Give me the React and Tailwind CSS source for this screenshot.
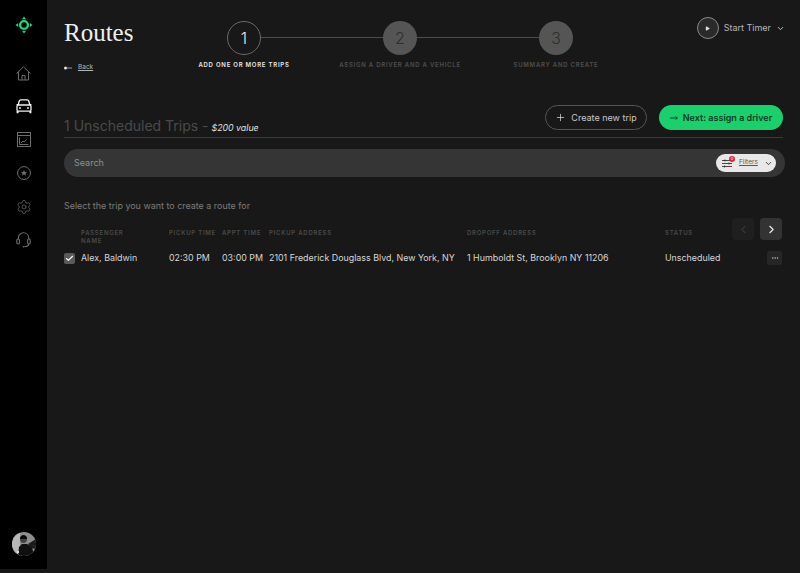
import React from "react";
import { Check, ChevronDown, ChevronLeft, ChevronRight, Plus, Play, Ellipsis, Settings } from "lucide-react";

const inter = { fontFamily: "Inter, 'Liberation Sans', sans-serif" };
const ICON = "#6e6e6e";

function Logo() {
  return (
    <svg width="18" height="18" viewBox="0 0 18 18" fill="none">
      <circle cx="9" cy="9" r="3.9" stroke="#1fd573" strokeWidth="2.4" />
      <path d="M9 0.5 L11 3.2 H7 Z M9 17.5 L7 14.8 H11 Z M0.5 9 L3.2 7 V11 Z M17.5 9 L14.8 11 V7 Z" fill="#1fd573" />
    </svg>
  );
}

function HomeIcon() {
  return (
    <svg width="15" height="15" viewBox="0 0 15 15" fill="none" stroke={ICON} strokeWidth="1">
      <path d="M0.5 7.5 L7.5 0.8 L14.5 7.5" />
      <path d="M2.5 6 V14 H12.5 V6" />
      <path d="M6 14 V9.5 H9 V14" />
    </svg>
  );
}

function CarIcon() {
  return (
    <svg width="16" height="15" viewBox="0 0 16 15" fill="none" stroke="#f2f2f2" strokeWidth="1.3">
      <path d="M2.2 6 L3.2 2 C3.4 1.2 4 0.8 4.8 0.8 H11.2 C12 0.8 12.6 1.2 12.8 2 L13.8 6" />
      <rect x="1" y="6" width="14" height="6.2" rx="1.4" />
      <path d="M1.6 12 V14.2 M14.4 12 V14.2" strokeWidth="2" />
      <path d="M0.6 5.6 H2.6 M13.4 5.6 H15.4" />
      <circle cx="4" cy="9" r="0.9" fill="#f2f2f2" stroke="none" />
      <circle cx="12" cy="9" r="0.9" fill="#f2f2f2" stroke="none" />
    </svg>
  );
}

function ReportIcon() {
  return (
    <svg width="14" height="15" viewBox="0 0 14 15" fill="none" stroke={ICON} strokeWidth="1">
      <rect x="0.5" y="0.5" width="13" height="14" />
      <path d="M0.5 3.5 H13.5" />
      <path d="M2.5 5.5 V12.5 H11.5" />
      <path d="M4 11 L6 9 L7.2 10 L9.5 7.5" />
    </svg>
  );
}

function StarCircle() {
  return (
    <svg width="14" height="14" viewBox="0 0 14 14" fill="none">
      <circle cx="7" cy="7" r="6.4" stroke={ICON} />
      <path d="M7 4 L7.9 6 L10 6.2 L8.4 7.6 L8.9 9.7 L7 8.6 L5.1 9.7 L5.6 7.6 L4 6.2 L6.1 6 Z" fill={ICON} />
    </svg>
  );
}

function HeadsetIcon() {
  return (
    <svg width="15" height="16" viewBox="0 0 15 16" fill="none" stroke={ICON} strokeWidth="1.1">
      <path d="M2.3 7 V6 C2.3 3 4.6 0.8 7.5 0.8 C10.4 0.8 12.7 3 12.7 6 V7" />
      <rect x="0.8" y="7" width="2.6" height="5" rx="1.2" />
      <rect x="11.6" y="7" width="2.6" height="5" rx="1.2" />
      <path d="M12.7 12 C12.7 13.6 11 14.6 8.6 14.6" />
      <circle cx="7.6" cy="14.6" r="0.9" fill={ICON} stroke="none" />
    </svg>
  );
}

function Avatar() {
  return (
    <svg width="24" height="24" viewBox="0 0 24 24">
      <defs>
        <clipPath id="av"><circle cx="12" cy="12" r="12" /></clipPath>
      </defs>
      <g clipPath="url(#av)">
        <rect width="24" height="24" fill="#8f8f8f" />
        <rect x="0" y="0" width="8" height="24" fill="#b8b8b8" />
        <path d="M6 24 L7 15 L10 12 L15 12 L20 15 L22 24 Z" fill="#101010" />
        <path d="M16 12 L24 7 V17 L19 16 Z" fill="#1c1c1c" />
        <circle cx="11.5" cy="7.5" r="3.4" fill="#444" />
        <path d="M8 6 C8.5 2 14.5 2 15 6 L15 7 H8 Z" fill="#0a0a0a" />
        <rect x="5" y="19" width="2" height="2" fill="#ddd" />
      </g>
    </svg>
  );
}

function Step({ n, label, active }) {
  return (
    <div className="relative flex w-[34px] flex-col items-center">
      <div
        className={
          active
            ? "z-10 flex h-[34px] w-[34px] items-center justify-center rounded-full border border-[#6a6a6a] bg-[#181818] text-[16px] font-light text-[#ececec]"
            : "z-10 flex h-[34px] w-[34px] items-center justify-center rounded-full bg-[#555555] text-[16px] font-light text-[#2e2e2e]"
        }
      >
        {n}
      </div>
      <div
        className={
          "absolute top-[39px] whitespace-nowrap text-[6px] font-semibold tracking-[0.75px] " +
          (active ? "text-[#e8e8e8]" : "text-[#4f4f4f]")
        }
      >
        {label}
      </div>
    </div>
  );
}

const headCls = "text-[6px] font-semibold leading-[7.5px] tracking-[0.75px] text-[#4a4a4a]";
const cellCls = "text-[8.9px] whitespace-nowrap text-[#d6d6d6]";

export default function App() {
  return (
    <div className="flex h-[573px] w-[800px] overflow-hidden bg-[#181818] antialiased" style={inter}>
      <aside className="flex h-[569px] w-[47px] shrink-0 flex-col items-center bg-black pt-[16px]">
        <Logo />
        <div className="mt-[31px] flex flex-col items-center gap-[17.4px]">
          <div className="flex h-[16px] items-center"><HomeIcon /></div>
          <div className="flex h-[16px] items-center"><CarIcon /></div>
          <div className="flex h-[16px] items-center"><ReportIcon /></div>
          <div className="flex h-[16px] items-center"><StarCircle /></div>
          <div className="flex h-[16px] items-center"><Settings size={16} strokeWidth={1.1} color={ICON} /></div>
          <div className="flex h-[16px] items-center"><HeadsetIcon /></div>
        </div>
        <div className="mt-auto mb-[13px]"><Avatar /></div>
      </aside>

      <main className="flex min-w-0 flex-1 flex-col pl-[17px] pr-[17px]">
        <header className="flex h-[105px] items-start">
          <div className="w-[134px] pt-[19px]">
            <h1 className="text-[25px] leading-[28px] text-[#efefef]" style={{ fontFamily: "'Liberation Serif', serif" }}>Routes</h1>
            <div className="mt-[16px] flex items-center gap-[6px]">
              <svg width="8" height="4" viewBox="0 0 8 4"><circle cx="1.5" cy="2" r="1.5" fill="#e5e5e5" /><path d="M2 2 H8" stroke="#bbb" strokeWidth="0.8" /></svg>
              <span className="text-[6.5px] text-[#b5b5b5] underline">Back</span>
            </div>
          </div>
          <div className="relative ml-[29px] mt-[21px] flex w-[346px] items-center justify-between">
            <div className="absolute left-[17px] right-[17px] top-[16px] h-[1px] bg-[#4c4c4c]" />
            <Step n="1" label="ADD ONE OR MORE TRIPS" active />
            <Step n="2" label="ASSIGN A DRIVER AND A VEHICLE" />
            <Step n="3" label="SUMMARY AND CREATE" />
          </div>
          <div className="ml-auto -mr-[2px] mt-[17px] flex items-center gap-[5px]">
            <div className="flex h-[22px] w-[22px] items-center justify-center rounded-full border border-[#8a8a8a] bg-[#2a2a2a]">
              <Play size={5} fill="#e5e5e5" color="#e5e5e5" />
            </div>
            <span className="text-[9px] text-[#b5b5b5]">Start Timer</span>
            <ChevronDown size={9} strokeWidth={2.5} color="#c8c8c8" />
          </div>
        </header>

        <section className="flex h-[33px] items-end justify-between border-b border-[#3b3b3b]">
          <div className="flex items-baseline pb-[1px]">
            <span className="text-[14px] text-[#4a4a4a]">1 Unscheduled Trips -</span>
            <span className="ml-[3px] text-[8.8px] italic text-[#e2e2e2]">$200 value</span>
          </div>
          <div className="mb-[7px] flex items-center gap-[12px]">
            <button className="flex h-[25px] w-[102px] items-center justify-center gap-[5px] rounded-full border border-[#555555] text-[9px] text-[#c8c8c8]">
              <Plus size={11} strokeWidth={1.6} color="#dcdcdc" />
              Create new trip
            </button>
            <button className="flex h-[25px] w-[124px] items-center justify-center gap-[5px] rounded-full bg-[#1ad06d] text-[9px] font-semibold text-[#103a24]">
              <svg width="8" height="4" viewBox="0 0 8 4"><path d="M0 2 H7 M5.5 0.5 L7.5 2 L5.5 3.5" stroke="#103a24" strokeWidth="0.9" fill="none" /></svg>
              Next: assign a driver
            </button>
          </div>
        </section>

        <div className="mt-[11px] -mr-[2px] flex h-[28px] items-center justify-between rounded-full bg-[#353535] pl-[10px] pr-[9px]">
          <span className="text-[9px] text-[#8f8f8f]">Search</span>
          <div className="flex h-[18px] w-[60px] items-center rounded-full bg-[#e8e8e8] pl-[6px]">
            <div className="relative">
              <svg width="10" height="9" viewBox="0 0 10 9" stroke="#333" strokeWidth="0.9" fill="none">
                <path d="M0 1.5 H10 M0 4.5 H10 M0 7.5 H10" />
                <path d="M3 0.5 V2.5 M7 3.5 V5.5 M2.5 6.5 V8.5" />
              </svg>
              <span className="absolute -right-[3px] -top-[3px] flex h-[6px] w-[6px] items-center justify-center rounded-full bg-[#e0243c] text-[4px] leading-none text-white">0</span>
            </div>
            <span className="ml-[7px] text-[6.5px] text-[#555555] underline">Filters</span>
            <ChevronDown size={9} strokeWidth={2.4} color="#333" className="ml-[6px]" />
          </div>
        </div>

        <p className="mt-[23px] text-[8.95px] leading-[12px] text-[#7c7c7c]">Select the trip you want to create a route for</p>

        <div className="relative mt-[6px]">
          <div className="grid h-[24px] grid-cols-[88px_53px_47px_198px_198px_1fr] items-start pl-[17px] pt-[11px]">
            <div className={headCls + " w-[60px]"}>PASSENGER NAME</div>
            <div className={headCls}>PICKUP TIME</div>
            <div className={headCls}>APPT TIME</div>
            <div className={headCls}>PICKUP ADDRESS</div>
            <div className={headCls}>DROPOFF ADDRESS</div>
            <div className={headCls}>STATUS</div>
          </div>
          <div className="absolute right-[1px] top-0 flex gap-[6px]">
            <div className="flex h-[22px] w-[22px] items-center justify-center rounded-[4px] bg-[#1f1f1f]"><ChevronLeft size={13} strokeWidth={1.6} color="#4a4a4a" /></div>
            <div className="flex h-[22px] w-[22px] items-center justify-center rounded-[4px] bg-[#333333]"><ChevronRight size={13} strokeWidth={2} color="#f0f0f0" /></div>
          </div>
          <div className="mt-[9px] grid h-[14px] grid-cols-[17px_88px_53px_47px_198px_198px_1fr_16px] items-center">
            <div className="flex h-[11px] w-[11px] items-center justify-center rounded-[2px] bg-[#5a5a5a]"><Check size={9} strokeWidth={3} color="#fff" /></div>
            <div className={cellCls}>Alex, Baldwin</div>
            <div className={cellCls}>02:30 PM</div>
            <div className={cellCls}>03:00 PM</div>
            <div className={cellCls}>2101 Frederick Douglass Blvd, New York, NY</div>
            <div className={cellCls}>1 Humboldt St, Brooklyn NY 11206</div>
            <div className={cellCls}>Unscheduled</div>
            <div className="flex h-[14px] w-[15px] items-center justify-center rounded-[2px] bg-[#262626]"><Ellipsis size={8} color="#bdbdbd" /></div>
          </div>
        </div>
      </main>
    </div>
  );
}
